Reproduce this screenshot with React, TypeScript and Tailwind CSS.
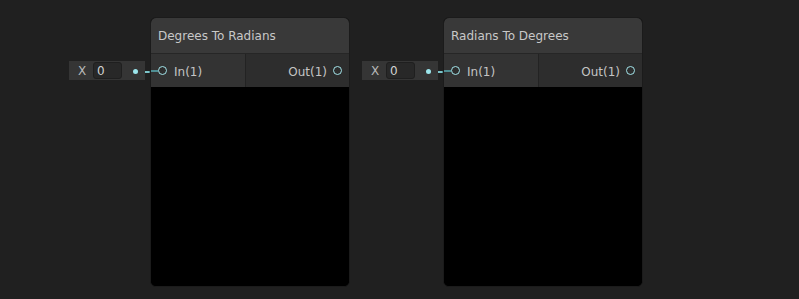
const NODES = [
  { title: "Degrees To Radians", left: 69 },
  { title: "Radians To Degrees", left: 362 },
];

function Port() {
  return <div className="h-[9px] w-[9px] shrink-0 rounded-full border-[1.5px] border-[#a3e4ea] bg-[#2d2d2d]" />;
}

function Node({ title, left }: { title: string; left: number }) {
  return (
    <div className="absolute top-[17px] flex items-start" style={{ left }}>
      {/* inline input field + wire */}
      <div className="mt-[44px] flex h-[19px] items-center">
        <div className="flex h-full w-[76px] items-center bg-[#353535] pl-[9px] text-[12px]">
          <span className="w-[14px] text-[#b9b9b9]">X</span>
          <div className="ml-px flex h-[17px] w-[29px] items-center rounded-[3px] border border-[#1f1f1f] bg-[#282828] pl-[3px] text-[#d2d2d2]">
            0
          </div>
          <div className="ml-auto mr-[7px] mt-px h-[5px] w-[5px] rounded-full bg-[#9ce6ec]" />
        </div>
        <div className="mt-[3px] h-[2px] w-[4px] bg-[#7cc4c9]" />
        <div className="mt-[3px] h-[2px] w-px bg-[#4f8e93]" />
      </div>

      {/* node */}
      <div className="flex h-[270px] w-[200px] flex-col overflow-hidden rounded-[6px] border border-[#1b1b1b] bg-black">
        <div className="flex h-[36px] shrink-0 items-center border-b border-[#262626] bg-[#393939] pl-[7px] text-[12px] text-[#c8c8c8]">
          {title}
        </div>
        <div className="flex h-[33px] shrink-0 bg-[#2d2d2d] text-[12px] text-[#c4c4c4]">
          <div className="flex w-[95px] items-center border-r border-[#232323] bg-[#333333]">
            <div className="mt-px h-[2px] w-[7px] bg-[#4f8e93]" />
            <Port />
            <span className="ml-[7px] mt-[2px]">In(1)</span>
          </div>
          <div className="flex flex-1 items-center justify-end gap-[6px] pr-[7px]">
            <span className="mt-[2px]">Out(1)</span>
            <Port />
          </div>
        </div>
        <div className="flex-1 bg-black" />
      </div>
    </div>
  );
}

export default function App() {
  return (
    <div
      className="relative h-[299px] w-[799px] overflow-hidden bg-[#202020]"
      style={{ fontFamily: '"DejaVu Sans", "Open Sans", sans-serif' }}
    >
      {NODES.map((n) => (
        <Node key={n.title} {...n} />
      ))}
    </div>
  );
}
